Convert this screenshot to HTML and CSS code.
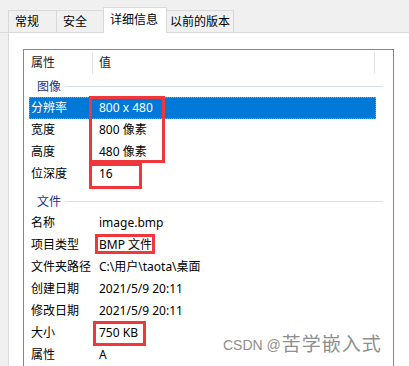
FILE: index.html
```html
<!DOCTYPE html>
<html>
<head>
<meta charset="utf-8">
<link rel="stylesheet" href="styles.css">
</head>
<body>
<div class="window">
  <div class="tabs">
    <div class="tab t1">常规</div>
    <div class="tab t2">安全</div>
    <div class="tab t3 active">详细信息</div>
    <div class="tab t4">以前的版本</div>
  </div>
  <div class="panel">
    <div class="list">
      <div class="header">
        <div class="hcell c1">属性</div>
        <div class="hcell c2">值</div>
      </div>
      <div class="group"><span>图像</span><i class="gline"></i></div>
      <div class="row selected"><span class="k">分辨率</span><span class="v">800 x 480</span></div>
      <div class="row"><span class="k">宽度</span><span class="v">800 像素</span></div>
      <div class="row"><span class="k">高度</span><span class="v">480 像素</span></div>
      <div class="row"><span class="k">位深度</span><span class="v">16</span></div>
      <div class="group second"><span>文件</span><i class="gline"></i></div>
      <div class="row"><span class="k">名称</span><span class="v">image.bmp</span></div>
      <div class="row"><span class="k">项目类型</span><span class="v">BMP 文件</span></div>
      <div class="row"><span class="k">文件夹路径</span><span class="v">C:\用户\taota\桌面</span></div>
      <div class="row"><span class="k">创建日期</span><span class="v">2021/5/9 20:11</span></div>
      <div class="row"><span class="k">修改日期</span><span class="v">2021/5/9 20:11</span></div>
      <div class="row"><span class="k">大小</span><span class="v">750 KB</span></div>
      <div class="row"><span class="k">属性</span><span class="v">A</span></div>
    </div>
  </div>
  <div class="box b1"></div>
  <div class="box b2"></div>
  <div class="box b3"></div>
  <div class="box b4"></div>
  <div class="mark">CSDN @<span class="cjk">苦学嵌入式</span></div>
</div>
</body>
</html>
```
FILE: styles.css
```css
html, body {
  margin: 0;
  padding: 0;
  background: #f0f0f0;
}
.window {
  position: relative;
  width: 409px;
  height: 366px;
  overflow: hidden;
  font-family: "Noto Sans", "Noto Sans CJK SC", sans-serif;
  font-size: 12px;
  color: #000;
}
.tabs {
  display: flex;
  align-items: flex-end;
  height: 33px;
  padding-left: 8px;
  box-sizing: border-box;
  border-bottom: 1px solid #d9d9d9;
}
.tab {
  box-sizing: border-box;
  height: 22px;
  line-height: 21px;
  border: 1px solid #d9d9d9;
  border-bottom: none;
  margin-right: -1px;
  background: #f0f0f0;
  white-space: nowrap;
}
.t1 { width: 49px; padding-left: 6px; }
.t2 { width: 48px; padding-left: 6px; }
.t3 { width: 64px; padding-left: 6px; }
.t4 { width: 68px; padding-left: 3px; }
.tab.active {
  height: 26px;
  margin-bottom: -1px;
  line-height: 24px;
  background: #fff;
  position: relative;
  z-index: 1;
}
.panel {
  background: #fff;
  margin-left: 8px;
  border-left: 1px solid #d9d9d9;
  height: 333px;
  padding: 16px 0 0 14px;
  box-sizing: border-box;
}
.list {
  width: 371px;
  height: 400px;
  box-sizing: border-box;
  border: 1px solid #828790;
}
.header {
  display: flex;
  height: 25px;
}
.hcell {
  box-sizing: border-box;
  height: 23px;
  margin-top: 1px;
  line-height: 23px;
  border-right: 1px solid #e5e5e5;
  color: #1a1a1a;
}
.c1 { width: 69px; padding-left: 7px; }
.c2 { width: 282px; padding-left: 6px; }
.group {
  display: flex;
  align-items: center;
  height: 22px;
  padding-left: 13px;
  color: #1e3287;
}
.group.second {
  margin-top: 5px;
  height: 22px;
}
.gline {
  flex: 1;
  height: 1px;
  background: #dbe2ee;
  margin: 0 10px 0 4px;
}
.row {
  display: flex;
  box-sizing: border-box;
  margin-left: 5px;
  width: 347px;
  height: 22px;
  line-height: 22px;
  white-space: nowrap;
}
.row .k {
  width: 70px;
  padding-left: 2px;
  box-sizing: border-box;
}
.row.selected {
  background: #0078d7;
  color: #fff;
  border: 1px dotted #f08a1c;
  line-height: 20px;
}
.row.selected .k {
  width: 69px;
  padding-left: 1px;
}
.box {
  position: absolute;
  box-sizing: border-box;
  border: 3px solid #f0383c;
}
.b1 { left: 89px; top: 96px; width: 76px; height: 67px; }
.b2 { left: 89px; top: 163px; width: 53px; height: 26px; }
.b3 { left: 95px; top: 234px; width: 60px; height: 20px; }
.b4 { left: 93px; top: 321px; width: 53px; height: 25px; }
.mark {
  position: absolute;
  left: 223px;
  top: 333px;
  font-family: "Liberation Sans", "Noto Sans CJK SC", sans-serif;
  font-size: 14px;
  line-height: 24px;
  color: #8e8e8e;
  text-shadow: 0 0 1px #fff, 0 0 1px #fff;
  white-space: nowrap;
}
.mark .cjk {
  font-size: 19px;
  letter-spacing: 1px;
  margin-left: 1px;
  vertical-align: -1px;
}
```
